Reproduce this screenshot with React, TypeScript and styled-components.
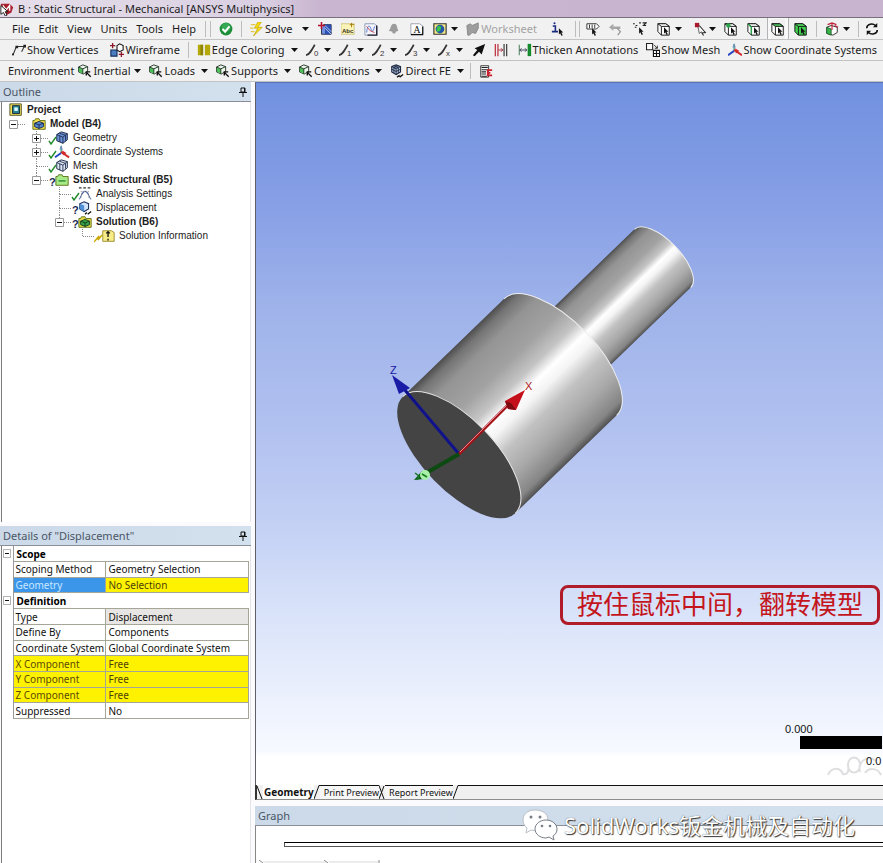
import React from "react";
import styled, { createGlobalStyle } from "styled-components";

const Global = createGlobalStyle`
  *, *::before, *::after { box-sizing: border-box; }
  body { margin: 0; background: #fff; }
`;

/* ---------- icons ---------- */

const Svg = styled.svg`
  display: block;
  flex: none;
`;

const cursor = (x: number, y: number) => (
  <path d={`M${x} ${y}l5 5h-2.2l1.6 3-1.5.8-1.5-3L${x} ${y + 7.4}z`} fill="#111" />
);

const greenCube = (
  <>
    <path d="M.5 3.500 5.500 1 11 3v5.500L6 11.500.5 9z" fill="#eaf6ea" stroke="#1c2a1e" />
    <path d="M1 4 5.500 5.800V11L1 8.800z" fill="#4cc058" />
    <path d="M.5 3.500 5.500 5.500 11 3M5.500 5.500v6" fill="none" stroke="#1c2a1e" />
    <path d="M9 9l5.500 5.500M9.500 13V9H14" fill="none" stroke="#111" strokeWidth="1.600" />
  </>
);

const selectCube = (top: string, front: string, corner: string) => (
  <>
    <path d="M1 2h9l4 3v10H5L1 11z" fill={front} stroke="#1a1a1a" strokeWidth="1.100" />
    <path d="M1 2h9l4 3H5z" fill={top} stroke="#1a1a1a" strokeWidth="1.100" />
    <path d="M5 5v10" stroke="#1a1a1a" strokeWidth="1.100" />
    <circle cx="5" cy="4" r="2.500" fill={corner} />
    {cursor(8, 6)}
  </>
);

const diagonal = (label: string) => (
  <>
    <path d="M0 14c4-1 6-5 10-12" fill="none" stroke="#333" strokeWidth="2" />
    <text x="9" y="15" fontSize="9" fontFamily="Liberation Sans, sans-serif" fill="#333">{label}</text>
  </>
);

const blueCube = (fill: string) => (
  <>
    <path d="M2 4l5-3 7 2v7l-5 4-7-3z" fill={fill} stroke="#1c2a4a" strokeWidth="1.100" />
    <path d="M2 4l7 3 5-4M9 7v7M5 2.500l7 2.500v6M5.500 5.500v7" fill="none" stroke="#1c2a4a" />
  </>
);

const folder = (fill: string) => (
  <path d="M1 4h2l1-2h4l1 2h6v10H1z" fill={fill} stroke="#5c6b12" />
);

const axes = (
  <>
    <path d="M7 9V1" stroke="#4b9a8a" strokeWidth="1.600" />
    <path d="M7 9L0 14" stroke="#2647c4" strokeWidth="2.200" />
    <path d="M7 8l9 6" stroke="#d22a2a" strokeWidth="2.200" />
    <path d="M8 6l5 3-4 3z" fill="#d22a2a" />
    <path d="M7 0L5 5h4z" fill="#6d93b8" />
  </>
);

const glyphs: Record<string, React.ReactNode> = {
  app: (
    <>
      <path d="M1 2h10l4 4-2 6-6 3-5-5z" fill="#a81e2c" />
      <path d="M4 11V5l3 4 4-5v6" fill="none" stroke="#fff" strokeWidth="1.600" />
      <path d="M1 4v10l3-2 2 4 2-1-2-4h3z" fill="#fff" stroke="#111" />
    </>
  ),
  check: (
    <>
      <circle cx="8" cy="8" r="7.300" fill="#1d8f3a" />
      <circle cx="8" cy="6" r="5" fill="#36a955" />
      <path d="M4 8l3 3 5-6" fill="none" stroke="#fff" strokeWidth="2.400" />
    </>
  ),
  bolt: (
    <>
      <path d="M9 0L5 7h4l-5 9L14 6H9l4-6z" fill="#f7de12" stroke="#c2a400" strokeWidth=".8" />
      <path d="M1 3h5M0 7h4M1 11h4" stroke="#d8b800" />
    </>
  ),
  newChart: (
    <>
      <path d="M6 3h9v11H4V8" fill="#6f8fe0" stroke="#223" />
      <path d="M8 14V3h7v11z" fill="#2b51b5" />
      <path d="M8 7l7 7M8 4l7 7" stroke="#cfe0ff" />
      <path d="M4 0v8M0 4h8" stroke="#b3122c" strokeWidth="1.800" />
    </>
  ),
  abc: (
    <>
      <path d="M0 2h15v12H0z" fill="#fbf3b8" stroke="#cfc27a" />
      <text x="1" y="12" fontSize="7" fontFamily="Liberation Sans, sans-serif" fontWeight="700" fill="#332">Abc</text>
      <path d="M12 1v5M10 3h5" stroke="#a07a00" />
    </>
  ),
  plot: (
    <>
      <path d="M1 2h11l3 3v10H1z" fill="#f3f5fb" stroke="#8794b0" />
      <path d="M14.500 4v11H4" stroke="#223" strokeWidth="1.500" fill="none" />
      <path d="M3 12C4 2 7 4 8 8s3 3 4-3" fill="none" stroke="#4d6fca" />
      <path d="M3 5l4 5 5 2" fill="none" stroke="#c43a48" />
    </>
  ),
  bell: <path d="M8 2c4 0 3 4 5 8l-3 1c0 3-4 3-4 0l-4-1C5 7 4 2 8 2z" fill="#9b9b9b" />,
  letter: (
    <>
      <path d="M1 2h10l4 3v9H1z" fill="#fff" stroke="#99a" />
      <path d="M14.500 5v9.500H1" stroke="#111" strokeWidth="1.300" fill="none" />
      <text x="4" y="12" fontSize="11" fontFamily="Liberation Serif, serif" fill="#111">A</text>
    </>
  ),
  globe: (
    <>
      <path d="M1 2h14v12H1z" fill="#f5e98a" stroke="#333" strokeWidth="1.300" />
      <circle cx="8" cy="8" r="5" fill="#2356a8" />
      <path d="M5 5c3-2 5 0 4 3s-4 5-5 1z" fill="#36c94a" />
    </>
  ),
  sheet: <path d="M1 4l4-2 2 2 7-3v6l-3 6-4-1-3 3H2z" fill="#9d9d9d" stroke="#858585" />,
  info: (
    <>
      <path d="M2 4.500h3v6M1 11h7" stroke="#1b2c80" strokeWidth="1.800" fill="none" />
      <circle cx="4" cy="1.500" r="1.200" fill="#1b2c80" />
      {cursor(9, 7)}
    </>
  ),
  tag: (
    <>
      <path d="M1 2h11l3 3-3 3H1z" fill="#fff" stroke="#222" />
      <path d="M4 3v4M7 3v4M10 3v4" stroke="#222" />
      {cursor(7, 7)}
    </>
  ),
  wand: (
    <>
      <path d="M0 6l5-4v3h8v3H5v2z" fill="#a8a8a8" />
      <path d="M9 7l4 4-3 4" fill="none" stroke="#999" strokeWidth="1.500" />
    </>
  ),
  dots: (
    <>
      <path d="M0 2h2M3 4h2M7 1h2M11 1h4l-3 3h3M2 6h2" stroke="#222" strokeWidth="1.300" fill="none" />
      {cursor(7, 6)}
    </>
  ),
  cubeSel: selectCube("#fff", "#fff", "none"),
  vertexSel: selectCube("#fff", "#fff", "#2ba44a"),
  edgeSel: (
    <>
      {selectCube("#fff", "#fff", "none")}
      <path d="M1.500 2.500L5 6v8" stroke="#2ba44a" strokeWidth="1.600" fill="none" />
    </>
  ),
  faceSel: selectCube("#4dc45e", "#fff", "none"),
  bodySel: selectCube("#4fe060", "#3fd050", "none"),
  pick: (
    <>
      <path d="M4 3l2 10 3-2" fill="none" stroke="#555" />
      <path d="M1 1h5v5H1z" fill="#a8192b" />
      <path d="M6 4l7 8-4 .5 2 3" fill="#fff" stroke="#222" strokeWidth="1.200" />
    </>
  ),
  viewCube: (
    <>
      <path d="M2 6l5-2 7 2v6l-5 3-7-2z" fill="#fff" stroke="#222" />
      <path d="M2 6l5 2v7l-5-2z" fill="#3bb54d" stroke="#195e25" />
      <path d="M3 3l5-2 5 2M8 1v8M11 4l4 2" stroke="#c02038" strokeWidth="1.300" fill="none" />
    </>
  ),
  refresh: (
    <>
      <path d="M2 7c0-5 7-6 10-3M14 9c0 5-7 6-10 3" fill="none" stroke="#111" strokeWidth="1.800" />
      <path d="M14 1v5H9zM2 15v-5h5z" fill="#111" />
    </>
  ),
  vertices: (
    <>
      <path d="M1 14L5 4h9l-3 6" fill="none" stroke="#333" strokeWidth="1.200" />
      <path d="M4 3h3v3H4zM13 2h3v3h-3zM0 12h2v2H0z" fill="#222" />
    </>
  ),
  wire: (
    <>
      <path d="M1 8h7v7H1z" fill="#4a7ec0" stroke="#122f60" strokeWidth="1.300" />
      <path d="M8 3l3-2 4 2v5l-4 2-3-2z" fill="#fff" stroke="#111" strokeWidth="1.200" />
      <path d="M3 0v6M0 3h6M13 10v6M10 13h6" stroke="#8b1a2c" strokeWidth="1.500" />
    </>
  ),
  swatch: (
    <>
      <path d="M1 2h6v12H1zM9 2h6v12H9z" fill="#b5a90a" />
      <path d="M4 2h3v12H4z" fill="#8d8306" />
    </>
  ),
  d0: diagonal("0"),
  d1: diagonal("1"),
  d2: diagonal("2"),
  d3: diagonal("3"),
  dx: diagonal("x"),
  dart: <path d="M15 1L11 13 8 10l-5 5-2-1 5-6-3-2z" fill="#111" />,
  bars: (
    <>
      <path d="M1.500 1v14M4.500 1v14" stroke="#b8202f" strokeWidth="1.300" />
      <path d="M11.500 1v14M14.500 1v14" stroke="#333" strokeWidth="1.300" />
      <path d="M5 8h5M8 6l2 2-2 2" stroke="#a02030" fill="none" />
    </>
  ),
  thicken: (
    <>
      <path d="M1.500 2v12" stroke="#5a8b6a" strokeWidth="1.300" />
      <path d="M11 1h4v14h-4z" fill="#148a2c" />
      <path d="M2 8h8M4 6L2 8l2 2M8 6l2 2-2 2" stroke="#335" fill="none" />
    </>
  ),
  mesh: (
    <>
      <path d="M.6.6h7v7h-7z" fill="#fff" stroke="#222" strokeWidth="1.200" />
      <path d="M8.500 8.500h7v7h-7zM12 8.500v7M8.500 12h7" fill="#fff" stroke="#111" strokeWidth="1.300" />
      <path d="M9 2l4 4m0-3v3h-3" stroke="#222" fill="none" />
    </>
  ),
  axes,
  greenCube,
  directFe: (
    <>
      <path d="M2 3l5-2 5 2v6l-5 3-5-3z" fill="#b9cbe6" stroke="#1b2740" strokeWidth="1.300" />
      <path d="M2 3l5 2.500L12 3M7 5.500V12M4.500 2l5 2.500v6M9.500 2l-5 2.500v6M2 6l5 2.500L12 6" fill="none" stroke="#1b2740" />
      <path d="M8 15l3-2m0 2l4-3" stroke="#111" strokeWidth="1.500" />
    </>
  ),
  report: (
    <>
      <path d="M2 2h9v13H2z" fill="#fff" stroke="#222" />
      <path d="M3 4h7M3 6.500h7M3 9h5M3 11.500h5M3 14h6" stroke="#222" strokeWidth="1.200" />
      <path d="M15 7h-5v6h5M9 10h4" stroke="#cf1f2e" strokeWidth="2" fill="none" />
    </>
  ),
  project: (
    <>
      <path d="M1 1h13v13H1z" fill="#efe05a" stroke="#4c4a1c" />
      <path d="M4 3h8v9H4z" fill="#2a7f94" stroke="#123" />
      <path d="M6 5h4v4H6z" fill="#dff" />
    </>
  ),
  model: (
    <>
      {folder("#f1dd4b")}
      <path d="M3 7l5-2 5 2v4l-5 2-5-2z" fill="#5a87c8" stroke="#14264d" />
      <path d="M3 7l5 2 5-2M8 9v4" stroke="#14264d" fill="none" />
    </>
  ),
  geometry: blueCube("#6d93da"),
  meshTree: blueCube("#dfe6f4"),
  staticFolder: (
    <>
      {folder("#a6ea86")}
      <path d="M4 9h8" stroke="#1d7a2e" strokeWidth="1.400" />
    </>
  ),
  analysis: (
    <>
      <path d="M1 1h3M6 1h3M11 1h3" stroke="#333" strokeWidth="1.500" />
      <path d="M1 14C3 14 4 5 8 5s5 9 7 9" fill="none" stroke="#445f9c" strokeWidth="1.200" />
      <path d="M3 5h10M4 5v8M12 5v8" stroke="#999" fill="none" strokeDasharray="1 1" />
    </>
  ),
  displacement: (
    <>
      <path d="M2 3l5-2 5 2v6l-5 3-5-3z" fill="#cfe4fa" stroke="#1b2f5a" strokeWidth="1.200" />
      <path d="M2 3l5 2v7L2 9z" fill="#4f8fd6" />
      <path d="M8 15l2-2m1 2l4-3" stroke="#111" strokeWidth="1.500" />
    </>
  ),
  solution: (
    <>
      {folder("#e3d94c")}
      <path d="M3 7l5-2 5 2v4l-5 2-5-2z" fill="#35a34a" stroke="#12351a" />
      <path d="M3 7l5 2 5-2M8 9v4" stroke="#12351a" fill="none" />
    </>
  ),
  solInfo: (
    <>
      <path d="M2 2h10l3 2v10H2z" fill="#f7ec86" stroke="#99882a" />
      <path d="M8 3v6M8 11v2M6 5l2-2 2 2" stroke="#111" strokeWidth="1.500" fill="none" />
    </>
  ),
};

const Icon = ({ name, size = 14 }: { name: string; size?: number }) => (
  <Svg width={size} height={size} viewBox="0 0 16 16" aria-hidden="true">{glyphs[name]}</Svg>
);

/* ---------- top bars ---------- */

const Shell = styled.div`
  min-height: 100vh;
  display: flex;
  flex-direction: column;
  overflow: hidden;
  position: relative;
  background: #fbfbfd;
  color: #1c1c1c;
  font: 11px/14px "Noto Sans", "Open Sans", sans-serif;
`;

const TitleBar = styled.header`
  display: flex;
  align-items: center;
  gap: 4px;
  height: 18px;
  background: linear-gradient(90deg, #e6deea, #d9cfe2 30%, #c9b5cf 36%, #c8b4cf);
  border-bottom: 1px solid #77707c;
  white-space: nowrap;
`;

const Title = styled.h1`
  margin: 0;
  font: 400 11px/16px "Noto Sans", sans-serif;
`;

const Toolbar = styled.div<{ $height: number }>`
  display: flex;
  align-items: center;
  height: ${(p) => p.$height}px;
  padding-left: 8px;
  background: #f1f1f1;
  border-bottom: 1px solid #c3c3c5;
  white-space: nowrap;
  overflow: hidden;
`;

const Tool = styled.button<{ $before?: number; $muted?: boolean; $active?: boolean }>`
  display: flex;
  flex: none;
  align-items: center;
  gap: 1px;
  height: 20px;
  margin: 0 0 0 ${(p) => p.$before ?? 0}px;
  padding: 0;
  border: 0;
  background: none;
  box-shadow: ${(p) => (p.$active ? "0 0 0 3px #f8f8f8, 0 0 0 4px #b4b4b8" : "none")};
  color: ${(p) => (p.$muted ? "#a3a3a3" : "inherit")};
  font: inherit;
`;

const Divider = styled.span<{ $before?: number }>`
  flex: none;
  width: 1px;
  height: 16px;
  margin-left: ${(p) => p.$before ?? 8}px;
  background: #bdbdbd;
`;

const Caption = styled.span`
  flex: none;
`;

const Arrow = ({ before = 0 }: { before?: number }) => (
  <Tool $before={before} aria-label="More options">
    <Svg width="7" height="4" viewBox="0 0 7 4"><path d="M0 0h7L3.500 4z" fill="#111" /></Svg>
  </Tool>
);

type Item = { icon?: string; text?: string; before?: number; arrow?: number; sep?: boolean; muted?: boolean; active?: boolean };

const Items = ({ items }: { items: Item[] }) => (
  <>
    {items.map((it, i) =>
      it.sep ? (
        <Divider key={i} $before={it.before} />
      ) : (
        <React.Fragment key={i}>
          <Tool $before={it.before} $muted={it.muted} $active={it.active} aria-label={it.text ?? it.icon}>
            {it.icon && <Icon name={it.icon} />}
            {it.text}
          </Tool>
          {it.arrow !== undefined && <Arrow before={it.arrow} />}
        </React.Fragment>
      )
    )}
  </>
);

const menuItems: Item[] = [
  { text: "File", before: 4 },
  { text: "Edit", before: 9 },
  { text: "View", before: 9 },
  { text: "Units", before: 9 },
  { text: "Tools", before: 9 },
  { text: "Help", before: 9 },
  { sep: true, before: 9 },
  { sep: true, before: 4 },
  { icon: "check", before: 8 },
  { sep: true, before: 8 },
  { icon: "bolt", text: "Solve", before: 8, arrow: 10 },
  { icon: "newChart", before: 9 },
  { icon: "abc", before: 9 },
  { icon: "plot", before: 9 },
  { icon: "bell", before: 9 },
  { icon: "letter", before: 9 },
  { icon: "globe", before: 9, arrow: 4 },
  { icon: "sheet", text: "Worksheet", before: 8, muted: true },
  { icon: "info", before: 14 },
  { sep: true, before: 10 },
  { sep: true, before: 3 },
  { icon: "tag", before: 6 },
  { icon: "wand", before: 9 },
  { icon: "dots", before: 10 },
  { icon: "cubeSel", before: 10, arrow: 4 },
  { icon: "pick", before: 12, arrow: 1 },
  { icon: "vertexSel", before: 8 },
  { icon: "edgeSel", before: 9 },
  { icon: "faceSel", before: 10, active: true },
  { icon: "bodySel", before: 9 },
  { sep: true, before: 8 },
  { icon: "viewCube", before: 8, arrow: 4 },
  { sep: true, before: 8 },
  { icon: "refresh", before: 6 },
];

const displayItems: Item[] = [
  { icon: "vertices", text: "Show Vertices", before: 4 },
  { icon: "wire", text: "Wireframe", before: 12 },
  { sep: true, before: 8 },
  { icon: "swatch", text: "Edge Coloring", before: 8, arrow: 6 },
  { icon: "d0", before: 8, arrow: 4 },
  { icon: "d1", before: 8, arrow: 4 },
  { icon: "d2", before: 8, arrow: 4 },
  { icon: "d3", before: 8, arrow: 4 },
  { icon: "dx", before: 8, arrow: 4 },
  { icon: "dart", before: 9 },
  { icon: "bars", before: 8 },
  { icon: "thicken", text: "Thicken Annotations", before: 10 },
  { icon: "mesh", text: "Show Mesh", before: 8 },
  { icon: "axes", text: "Show Coordinate Systems", before: 8 },
];

const envItems: Item[] = [
  { icon: "greenCube", text: "Inertial", before: 4, arrow: 4 },
  { icon: "greenCube", text: "Loads", before: 8, arrow: 6 },
  { icon: "greenCube", text: "Supports", before: 8, arrow: 6 },
  { icon: "greenCube", text: "Conditions", before: 8, arrow: 6 },
  { icon: "directFe", text: "Direct FE", before: 8, arrow: 6 },
  { sep: true, before: 6 },
  { icon: "report", before: 8 },
];

/* ---------- panels ---------- */

const Workspace = styled.main`
  flex: 1;
  display: grid;
  grid-template-columns: 251px minmax(0, 1fr);
  gap: 4px;
`;

const Sidebar = styled.aside`
  display: grid;
  grid-template-rows: 17fr 13fr;
  gap: 4px;
  min-width: 0;
`;

const Panel = styled.section`
  display: flex;
  flex-direction: column;
  min-width: 0;
`;

const PanelHead = styled.div`
  display: flex;
  align-items: center;
  justify-content: space-between;
  height: 20px;
  padding: 0 4px 0 3px;
  background: linear-gradient(90deg, #cbd9e8, #d3e0ee);
  border-bottom: 1px solid #8b8f96;
  color: #4a5666;
  white-space: nowrap;
`;

const PanelTitle = styled.h2`
  margin: 0;
  font: 400 11px/14px "Noto Sans", sans-serif;
`;

const PinButton = styled.button`
  padding: 0;
  border: 0;
  background: none;
`;

const Pin = () => (
  <PinButton aria-label="Pin panel">
    <Svg width="8" height="10" viewBox="0 0 8 10">
      <path d="M2 1h4v4H2zM5.500 1v4M0 5.500h8M4 6v4" fill="none" stroke="#111" />
    </Svg>
  </PinButton>
);

const PanelBody = styled.div`
  flex: 1;
  margin-left: 1px;
  padding-right: 1px;
  background: #fff;
  border-left: 1px solid #7d7d7d;
  border-right: 1px solid #e4e4e8;
`;

const Tree = styled.ul`
  margin: 0;
  padding: 1px 0 0;
  list-style: none;
  font: 10px/14px "Liberation Sans", "Noto Sans", sans-serif;
`;

const TreeRow = styled.li<{ $bold?: boolean }>`
  display: flex;
  align-items: center;
  height: 14px;
  font-weight: ${(p) => (p.$bold ? 700 : 400)};
  white-space: nowrap;
`;

const TreeLabel = styled.span`
  margin-left: 3px;
`;

type Guide = "blank" | "line" | "tee" | "elbow" | "plus" | "minus" | "minusEnd" | "minusOnly";

const GuideCell = ({ kind }: { kind: Guide }) => {
  const boxed = kind === "plus" || kind.startsWith("minus");
  const up = kind !== "blank" && kind !== "minusOnly";
  const down = kind === "line" || kind === "tee" || kind === "plus";
  return (
    <Svg width="23" height="14" viewBox="0 0 23 14" aria-hidden="true">
      <g stroke="#8a8a8a" strokeDasharray="1 1">
        {up && <path d="M11.500 0v7" />}
        {down && <path d="M11.500 7v7" />}
        {kind !== "blank" && kind !== "line" && <path d="M12 7.500h11" />}
      </g>
      {boxed && (
        <>
          <path d="M7.500 3.500h8v8h-8z" fill="#fff" stroke="#9b9b9b" />
          <path d="M9 7.500h5" stroke="#111" />
          {kind === "plus" && <path d="M11.500 5v5" stroke="#111" />}
        </>
      )}
    </Svg>
  );
};

const TreeIcon = ({ name, mark }: { name: string; mark?: string }) => (
  <Svg width="22" height="14" viewBox="0 0 22 14" aria-hidden="true">
    <g transform="translate(7 0) scale(.88)">{glyphs[name]}</g>
    {mark === "ok" && <path d="M1 10l2 3 5-7" fill="none" stroke="#238a2c" strokeWidth="1.400" />}
    {mark === "ask" && (
      <text x="1" y="13" fontSize="11" fontWeight="700" fontFamily="Liberation Sans, sans-serif" fill="#1a2a55">?</text>
    )}
    {mark === "run" && <path d="M0 13l5-6-1 4 4-5" fill="none" stroke="#c9a800" strokeWidth="1.400" />}
  </Svg>
);

const treeRows: { guides: Guide[]; icon: string; mark?: string; text: string; bold?: boolean }[] = [
  { guides: [], icon: "project", text: "Project", bold: true },
  { guides: ["minusOnly"], icon: "model", text: "Model (B4)", bold: true },
  { guides: ["blank", "plus"], icon: "geometry", mark: "ok", text: "Geometry" },
  { guides: ["blank", "plus"], icon: "axes", mark: "ok", text: "Coordinate Systems" },
  { guides: ["blank", "tee"], icon: "meshTree", mark: "ok", text: "Mesh" },
  { guides: ["blank", "minusEnd"], icon: "staticFolder", mark: "ask", text: "Static Structural (B5)", bold: true },
  { guides: ["blank", "blank", "tee"], icon: "analysis", mark: "ok", text: "Analysis Settings" },
  { guides: ["blank", "blank", "tee"], icon: "displacement", mark: "ask", text: "Displacement" },
  { guides: ["blank", "blank", "minusEnd"], icon: "solution", mark: "ask", text: "Solution (B6)", bold: true },
  { guides: ["blank", "blank", "blank", "elbow"], icon: "solInfo", mark: "run", text: "Solution Information" },
];

const Details = styled.table`
  width: 100%;
  height: 173px;
  border-collapse: collapse;
  table-layout: fixed;
  font: 10px/14px "Noto Sans", sans-serif;
  white-space: nowrap;
`;

const GutterCol = styled.col`
  width: 11px;
`;

const LabelCol = styled.col`
  width: 92px;
`;

const Gutter = styled.td`
  padding: 0 0 0 1px;
  border-right: 1px solid #999;
`;

const FoldButton = styled.button`
  display: grid;
  place-items: center;
  width: 8px;
  height: 9px;
  padding: 0;
  border: 1px solid #b4b4b4;
  background: #fff;
`;

const GroupHead = styled.th`
  padding: 0 0 0 3px;
  text-align: left;
  color: #000;
`;

const tones = { plain: "#fff", yellow: "#fff200", gray: "#e8e6e4", blue: "#3b96ea" };
type Tone = keyof typeof tones;

const NameCell = styled.th<{ $tone: Tone }>`
  padding: 0 0 0 2px;
  border: 1px solid #a5a598;
  text-align: left;
  font-weight: 400;
  background: ${(p) => tones[p.$tone]};
  color: ${(p) => (p.$tone === "blue" ? "#c9e6ff" : p.$tone === "yellow" ? "#5a4a08" : "#111")};
`;

const ValueCell = styled.td<{ $tone: Tone }>`
  padding: 0 0 0 3px;
  border: 1px solid #a5a598;
  background: ${(p) => tones[p.$tone]};
  color: ${(p) => (p.$tone === "yellow" ? "#4d3f08" : "#111")};
`;

const groups: { name: string; rows: [string, string, Tone, Tone][] }[] = [
  {
    name: "Scope",
    rows: [
      ["Scoping Method", "Geometry Selection", "plain", "plain"],
      ["Geometry", "No Selection", "blue", "yellow"],
    ],
  },
  {
    name: "Definition",
    rows: [
      ["Type", "Displacement", "plain", "gray"],
      ["Define By", "Components", "plain", "plain"],
      ["Coordinate System", "Global Coordinate System", "plain", "plain"],
      ["X Component", "Free", "yellow", "yellow"],
      ["Y Component", "Free", "yellow", "yellow"],
      ["Z Component", "Free", "yellow", "yellow"],
      ["Suppressed", "No", "plain", "plain"],
    ],
  },
];

/* ---------- viewport ---------- */

const Stage = styled.div`
  display: flex;
  flex-direction: column;
  min-width: 0;
`;

const Viewport = styled.div`
  position: relative;
  flex: 1;
  overflow: hidden;
  border-left: 1px solid #5f5f66;
  border-top: 1px solid #5a73b8;
  background: linear-gradient(#7090df, #88a0e6 18%, #9fb3ea 32%, #b0c0ef 48%, #c2cff4 62%, #d8e2f9 75%, #ecf1fd 88%, #f6f9ff 95%, #fff 96%);
`;

const Model = styled.svg`
  position: absolute;
  left: 0;
  top: 0;
`;

const Callout = styled.p`
  position: absolute;
  right: 3px;
  top: 502px;
  margin: 0;
  padding: 0 14px 4px;
  border: 3px solid #b01c2a;
  border-radius: 8px;
  color: #c4151c;
  font: 26px/30px "Noto Sans CJK SC", sans-serif;
  white-space: nowrap;
`;

const Scale = styled.div`
  position: absolute;
  right: 0;
  bottom: 17px;
  width: 98px;
  color: #111;
  font: 11px/14px "Liberation Sans", sans-serif;
`;

const ScaleBar = styled.div`
  height: 13px;
  margin: 0 1px 5px 15px;
  background: #000;
`;

const ScaleEnd = styled.div`
  margin-left: 81px;
  white-space: nowrap;
`;

const Swirl = styled.svg`
  position: absolute;
  right: 0;
  bottom: 4px;
`;

const TabStrip = styled.div`
  display: flex;
  height: 15px;
  background: #f0f0f0;
  border-left: 2px solid #333;
  border-bottom: 1px solid #8d8d8d;
  font: 9px/13px "Noto Sans", sans-serif;
`;

const Tab = styled.button<{ $active?: boolean }>`
  padding: 0 0 0 ${(p) => (p.$active ? 1 : 4)}px;
  border: 0;
  border-top: 1px solid ${(p) => (p.$active ? "#fff" : "#111")};
  background: ${(p) => (p.$active ? "#fff" : "#f6f6f6")};
  font: inherit;
  font-size: ${(p) => (p.$active ? 10 : 9)}px;
  font-weight: ${(p) => (p.$active ? 700 : 400)};
  color: #111;
  white-space: nowrap;
`;

const TabRest = styled.div`
  flex: 1;
  border-top: 1px solid #111;
`;

const Slash = ({ d }: { d: string }) => (
  <Svg width="6" height="14" viewBox="0 0 6 14"><path d={d} fill="none" stroke="#111" /></Svg>
);

const GraphPanel = styled(Panel)`
  margin-top: 6px;
`;

const GraphBody = styled.div`
  height: 37px;
  padding: 16px 0 0 28px;
  overflow: hidden;
  background: #fff;
  border-left: 1px solid #888;
`;

const GraphTrack = styled.div`
  height: 5px;
  border: 1px solid #555;
  border-top-color: #000;
  border-right: 0;
`;

const GraphTabs = styled.svg`
  display: block;
  margin: 13px 0 0 -26px;
`;

const Watermark = styled.div`
  position: absolute;
  right: 28px;
  bottom: 22px;
  display: flex;
  align-items: center;
  gap: 6px;
  color: #fff;
  font: 22px/32px "Noto Sans", "Noto Sans CJK SC", sans-serif;
  text-shadow: 1px 1px 1px #333, 0 0 1px #555;
  white-space: nowrap;
`;

const Shaft = () => (
  <Model width="627" height="702" viewBox="256 84 627 702" role="img" aria-label="Stepped shaft model">
    <defs>
      <linearGradient id="steel">
        <stop offset="0" stopColor="#4d4d4d" />
        <stop offset=".05" stopColor="#747474" />
        <stop offset=".14" stopColor="#949494" />
        <stop offset=".3" stopColor="#a2a2a2" />
        <stop offset=".42" stopColor="#c4c4c4" />
        <stop offset=".5" stopColor="#fff" />
        <stop offset=".57" stopColor="#f4f4f4" />
        <stop offset=".68" stopColor="#c2c2c2" />
        <stop offset=".82" stopColor="#a8a8a8" />
        <stop offset=".95" stopColor="#858585" />
        <stop offset="1" stopColor="#505050" />
      </linearGradient>
    </defs>
    <g transform="translate(459 456) rotate(46)">
      <path d="M-40.500 -141V-283A40.500 17.500 0 0 1 40.500 -283V-141z" fill="url(#steel)" />
      <path d="M-40.500 -283A40.500 17.500 0 0 1 40.500 -283" fill="none" stroke="#eee" />
      <path d="M-81 0V-141A81 35.500 0 0 1 81 -141V0z" fill="url(#steel)" />
      <path d="M-81 -141A81 35.500 0 0 1 81 -141" fill="none" stroke="#eee" />
      <ellipse rx="81" ry="35.500" fill="#444" />
      <path d="M-81 0A81 35.500 0 0 1 81 0" fill="none" stroke="#e4e4e4" />
    </g>
    <path d="M459 455L404 390" stroke="#10128c" strokeWidth="3" />
    <path d="M392 376l7 19 11-6z" fill="#1a1ca8" />
    <path d="M459 455L507 407" stroke="#a3121a" strokeWidth="3" />
    <path d="M460 453L508 405" stroke="#e58a8a" />
    <path d="M525 391l-20 11 3 8 8 1z" fill="#c4101a" />
    <path d="M505 402l3 8 8 1-5-7z" fill="#7c0a10" />
    <path d="M459 455L428 473" stroke="#0c4a12" strokeWidth="4" />
    <path d="M414 481l8-9 6 3-4 5z" fill="#0c5a16" />
    <circle cx="425" cy="476" r="5" fill="#a8f0a8" />
    <path d="M415 474l4 3-2 4M422 475l5 3" stroke="#187a22" fill="none" strokeWidth="1.500" />
    <g fontFamily="Liberation Sans, sans-serif" fontSize="11">
      <text x="390" y="375" fill="#1818a0">Z</text>
      <text x="525" y="391" fill="#b01820">X</text>
    </g>
  </Model>
);

export default function App() {
  return (
    <Shell>
      <Global />
      <TitleBar>
        <Icon name="app" />
        <Title>B : Static Structural - Mechanical [ANSYS Multiphysics]</Title>
      </TitleBar>
      <Toolbar $height={22}><Items items={menuItems} /></Toolbar>
      <Toolbar $height={21}><Items items={displayItems} /></Toolbar>
      <Toolbar $height={21}>
        <Caption>Environment</Caption>
        <Items items={envItems} />
      </Toolbar>
      <Workspace>
        <Sidebar>
          <Panel>
            <PanelHead><PanelTitle>Outline</PanelTitle><Pin /></PanelHead>
            <PanelBody>
              <Tree>
                {treeRows.map((r) => (
                  <TreeRow key={r.text} $bold={r.bold}>
                    {r.guides.map((g, i) => <GuideCell key={i} kind={g} />)}
                    <TreeIcon name={r.icon} mark={r.mark} />
                    <TreeLabel>{r.text}</TreeLabel>
                  </TreeRow>
                ))}
              </Tree>
            </PanelBody>
          </Panel>
          <Panel>
            <PanelHead><PanelTitle>Details of "Displacement"</PanelTitle><Pin /></PanelHead>
            <PanelBody>
              <Details>
                <colgroup><GutterCol /><LabelCol /><col /></colgroup>
                <tbody>
                  {groups.map((g) => (
                    <React.Fragment key={g.name}>
                      <tr>
                        <Gutter>
                          <FoldButton aria-label={`Collapse ${g.name}`}>
                            <Svg width="4" height="1"><path d="M0 .5h4" stroke="#111" /></Svg>
                          </FoldButton>
                        </Gutter>
                        <GroupHead colSpan={2}>{g.name}</GroupHead>
                      </tr>
                      {g.rows.map(([name, value, a, b]) => (
                        <tr key={name}>
                          <Gutter />
                          <NameCell scope="row" $tone={a}>{name}</NameCell>
                          <ValueCell $tone={b}>{value}</ValueCell>
                        </tr>
                      ))}
                    </React.Fragment>
                  ))}
                </tbody>
              </Details>
            </PanelBody>
          </Panel>
        </Sidebar>
        <Stage>
          <Viewport>
            <Shaft />
            <Callout>按住鼠标中间，翻转模型</Callout>
            <Swirl width="56" height="28" viewBox="0 0 56 28" aria-hidden="true">
              <path d="M1 22c3-8 12-8 15-1 5 1 6-3 5-9 0-10 12-10 12 0s-12 10-12 0M33 19C30 8 42 1 49 8M38 20c4-6 13-5 16 2" fill="none" stroke="#dedee0" strokeWidth="2" />
            </Swirl>
            <Scale>
              0.000
              <ScaleBar />
              <ScaleEnd>0.0</ScaleEnd>
            </Scale>
          </Viewport>
          <TabStrip>
            <Slash d="M0 1l5 13" />
            <Tab $active>Geometry</Tab>
            <Slash d="M0 14L5 .5h1" />
            <Tab>Print Preview</Tab>
            <Slash d="M0 .5l5 13.500M0 14L5 1" />
            <Tab>Report Preview</Tab>
            <Slash d="M0 14L5 .5h1" />
            <TabRest />
          </TabStrip>
          <GraphPanel>
            <PanelHead><PanelTitle>Graph</PanelTitle></PanelHead>
            <GraphBody>
              <GraphTrack />
              <GraphTabs width="126" height="3" viewBox="0 0 126 3" aria-hidden="true">
                <path d="M4 1h62l3 2H7zM70 1h50v2H72z" fill="#ececec" />
                <path d="M1 0l4 3M66 0l4 3M121 0v3" stroke="#888" />
              </GraphTabs>
            </GraphBody>
          </GraphPanel>
        </Stage>
      </Workspace>
      <Watermark>
        <Svg width="36" height="32" viewBox="0 0 36 32" aria-hidden="true">
          <path d="M13 1C6 1 1 5 1 11c0 4 2 6 4 8l-1 5 5-3c12 3 17-3 17-10S20 1 13 1z" fill="#fff" stroke="#b9bec6" />
          <path d="M24 11c-6 0-11 4-11 9s5 9 11 9l3-1 5 3-1-4c3-2 4-4 4-7 0-5-5-9-11-9z" fill="#fff" stroke="#777d85" />
          <g fill="#777d85"><circle cx="9" cy="8" r="1.500" /><circle cx="18" cy="8" r="1.500" /><circle cx="20" cy="17" r="1.300" /><circle cx="28" cy="17" r="1.300" /></g>
        </Svg>
        SolidWorks钣金机械及自动化
      </Watermark>
    </Shell>
  );
}
